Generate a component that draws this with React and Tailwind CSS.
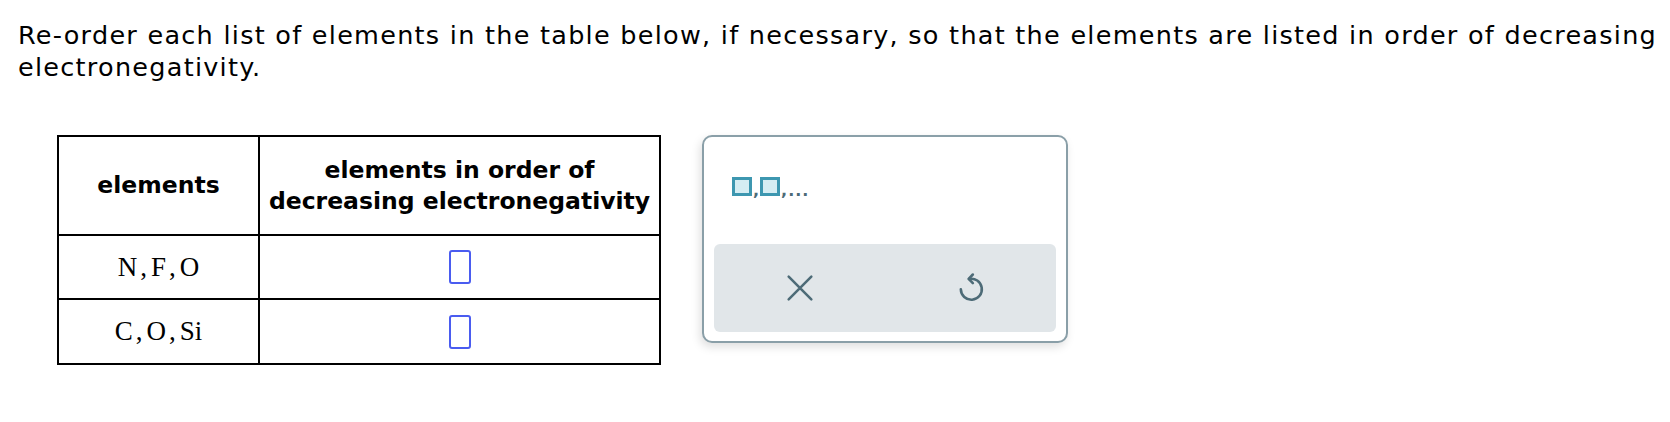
import React from "react";

const Sep = () => <span className="ml-[3px] mr-[4px]">,</span>;

const rows = [
  { id: 1, parts: ["N", "F", "O"] },
  { id: 2, parts: ["C", "O", "Si"] },
];

const AnswerBox = () => (
  <div className="w-[22px] h-[34px] border-2 border-[#4a5cf0] rounded-[3px] bg-white" />
);

const TemplateIcon = () => (
  <div className="flex items-end text-[#4d6b77] font-['DejaVu_Sans'] text-[16px] leading-none">
    <div className="w-[20px] h-[19px] border-[3px] border-[#3d97b0] bg-[#d5edf3]" />
    <span className="mx-[1px] translate-y-[3px] font-bold">,</span>
    <div className="w-[20px] h-[19px] border-[3px] border-[#3d97b0] bg-[#d5edf3]" />
    <span className="ml-[1px] translate-y-[3px] font-bold tracking-[1px]">,...</span>
  </div>
);

const XIcon = () => (
  <svg width="32" height="32" viewBox="0 0 24 24" fill="none" stroke="#4d6b77" strokeWidth="1.9" strokeLinecap="round">
    <path d="M3.5 3.5 L20.5 20.5 M20.5 3.5 L3.5 20.5" />
  </svg>
);

const UndoIcon = () => (
  <svg width="40" height="40" viewBox="0 0 24 24" fill="none" stroke="#4d6b77" strokeWidth="1.55" strokeLinecap="round" strokeLinejoin="round">
    <path d="M5.9 12.8 A6.3 6.3 0 1 0 10.8 6.6" />
    <path d="M13.1 3.9 L10.6 6.5 L13.1 9.1" />
  </svg>
);

export default function App() {
  return (
    <div className="bg-white w-[1670px] h-[422px] pl-[18px] pt-[19px] pr-[8px] font-['DejaVu_Sans',Verdana,sans-serif] text-black">
      <p className="text-[25.5px] leading-[32px] tracking-[1.27px] whitespace-nowrap">
        Re-order each list of elements in the table below, if necessary, so that the elements are listed in order of decreasing
        <br />
        electronegativity.
      </p>

      <div className="flex items-start mt-[52px] ml-[39px] gap-[41px]">
        {/* table */}
        <div className="w-[604px] border-2 border-black">
          <div className="flex h-[99px] border-b-2 border-black font-bold text-[23.5px] leading-[31px]">
            <div className="w-[201px] border-r-2 border-black flex items-center justify-center">elements</div>
            <div className="flex-1 flex flex-col items-center justify-center text-center">
              <span>elements in order of</span>
              <span>decreasing electronegativity</span>
            </div>
          </div>
          {rows.map((row, i) => (
            <div
              key={row.id}
              className={`flex ${i === 0 ? "h-[64px] border-b-2 border-black" : "h-[63px]"}`}
            >
              <div className="w-[201px] border-r-2 border-black flex items-center justify-center font-['Liberation_Serif',serif] text-[27px]">
                {row.parts.map((p, j) => (
                  <React.Fragment key={p}>
                    {p}
                    {j < row.parts.length - 1 && <Sep />}
                  </React.Fragment>
                ))}
              </div>
              <div className="flex-1 flex items-center justify-center">
                <AnswerBox />
              </div>
            </div>
          ))}
        </div>

        {/* answer panel */}
        <div className="w-[366px] h-[208px] border-2 border-[#8a9fa8] rounded-[10px] bg-white shadow-[-2px_4px_10px_rgba(0,0,0,0.13)] px-[10px] pb-[9px] flex flex-col">
          <div className="h-[107px] flex items-center pl-[18px] pb-[8px]">
            <TemplateIcon />
          </div>
          <div className="flex-1 bg-[#e1e6e9] rounded-[6px] flex">
            <button className="flex-1 flex items-center justify-center">
              <XIcon />
            </button>
            <button className="flex-1 flex items-center justify-center">
              <UndoIcon />
            </button>
          </div>
        </div>
      </div>
    </div>
  );
}
